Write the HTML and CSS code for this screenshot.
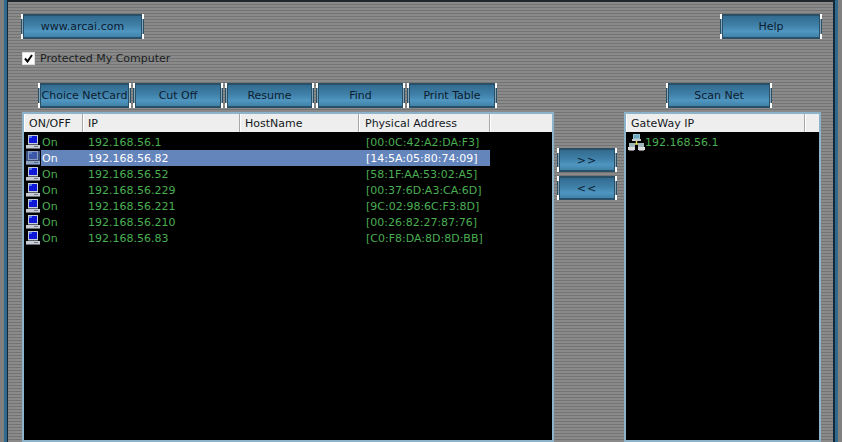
FILE: index.html
```html
<!DOCTYPE html>
<html lang="en">
  <head>
    <meta charset="UTF-8" />
    <meta name="viewport" content="width=device-width, initial-scale=1.0" />
    <title>Arcai NetCut</title>
    <link rel="stylesheet" href="styles.css">
  </head>
  <body>
    <svg class="defs" width="0" height="0">
      <symbol id="pc" viewBox="0 0 14 14">
        <rect x="2" y="0" width="10" height="9" fill="#c4ccdc" />
        <rect x="3" y="1" width="8" height="7" fill="#1018d8" />
        <rect x="3" y="1" width="3" height="2" fill="#5070e8" />
        <rect x="2" y="9" width="10" height="1" fill="#5c6068" />
        <rect x="0" y="10" width="14" height="3" fill="#c8ccd4" />
        <rect x="8" y="11" width="4" height="1" fill="#74787f" />
        <rect x="0" y="13" width="14" height="1" fill="#686c74" />
      </symbol>
      <symbol id="pc-selected" viewBox="0 0 14 14">
        <rect x="0" y="0" width="14" height="14" fill="#3c5280" />
        <rect x="2" y="0" width="10" height="9" fill="#8a9cc0" />
        <rect x="3" y="1" width="8" height="7" fill="#3c58a8" />
        <rect x="3" y="1" width="3" height="2" fill="#6080c4" />
        <rect x="2" y="9" width="10" height="1" fill="#3c4a68" />
        <rect x="0" y="10" width="14" height="3" fill="#90a4c4" />
        <rect x="8" y="11" width="4" height="1" fill="#5a6c90" />
        <rect x="0" y="13" width="14" height="1" fill="#506488" />
      </symbol>
      <symbol id="gate" viewBox="0 0 17 17">
        <rect x="5" y="0" width="7" height="5" fill="#8cc4d4" />
        <rect x="6" y="1" width="5" height="3" fill="#6fa8bc" />
        <rect x="4" y="5" width="9" height="2" fill="#c4ccd0" />
        <path d="M8.5 7V10M3.5 10H13.5" stroke="#e8e060" stroke-width="1.4" fill="none" />
        <rect x="1" y="9" width="6" height="4" fill="#a0b4bc" />
        <rect x="0" y="13" width="7" height="3" fill="#dcdcdc" />
        <rect x="1" y="16" width="5" height="1" fill="#7c8084" />
        <rect x="10" y="9" width="6" height="4" fill="#a0b4bc" />
        <rect x="10" y="13" width="7" height="3" fill="#dcdcdc" />
        <rect x="11" y="16" width="5" height="1" fill="#7c8084" />
      </symbol>
    </svg>

    <div class="frame">
      <div class="panel">
        <div class="top-row">
          <button class="btn btn-site">www.arcai.com</button>
          <button class="btn btn-help">Help</button>
        </div>

        <label class="protect">
          <span class="check">
            <svg width="9" height="9" viewBox="0 0 9 9"><path d="M1 4.5L3.5 7.5L8 1" stroke="#000" stroke-width="2" fill="none" /></svg>
          </span>
          Protected My Computer
        </label>

        <div class="toolbar">
          <button class="btn btn-card">Choice NetCard</button>
          <button class="btn btn-cut">Cut Off</button>
          <button class="btn btn-resume">Resume</button>
          <button class="btn btn-find">Find</button>
          <button class="btn btn-print">Print Table</button>
          <button class="btn btn-scan">Scan Net</button>
        </div>

        <div class="lists">
          <div class="list list-hosts">
            <div class="list-head">
              <div class="col col-onoff">ON/OFF</div>
              <div class="col col-ip">IP</div>
              <div class="col col-host">HostName</div>
              <div class="col col-mac">Physical Address</div>
              <div class="col col-rest"></div>
            </div>
            <div class="list-body">
              <div class="row">
                <svg class="pc"><use href="#pc" /></svg>
                <div class="row-cells"><span class="cell-on">On</span><span class="cell-ip">192.168.56.1</span><span>[00:0C:42:A2:DA:F3]</span></div>
              </div>
              <div class="row selected">
                <svg class="pc"><use href="#pc-selected" /></svg>
                <div class="row-cells"><span class="cell-on">On</span><span class="cell-ip">192.168.56.82</span><span>[14:5A:05:80:74:09]</span></div>
              </div>
              <div class="row">
                <svg class="pc"><use href="#pc" /></svg>
                <div class="row-cells"><span class="cell-on">On</span><span class="cell-ip">192.168.56.52</span><span>[58:1F:AA:53:02:A5]</span></div>
              </div>
              <div class="row">
                <svg class="pc"><use href="#pc" /></svg>
                <div class="row-cells"><span class="cell-on">On</span><span class="cell-ip">192.168.56.229</span><span>[00:37:6D:A3:CA:6D]</span></div>
              </div>
              <div class="row">
                <svg class="pc"><use href="#pc" /></svg>
                <div class="row-cells"><span class="cell-on">On</span><span class="cell-ip">192.168.56.221</span><span>[9C:02:98:6C:F3:8D]</span></div>
              </div>
              <div class="row">
                <svg class="pc"><use href="#pc" /></svg>
                <div class="row-cells"><span class="cell-on">On</span><span class="cell-ip">192.168.56.210</span><span>[00:26:82:27:87:76]</span></div>
              </div>
              <div class="row">
                <svg class="pc"><use href="#pc" /></svg>
                <div class="row-cells"><span class="cell-on">On</span><span class="cell-ip">192.168.56.83</span><span>[C0:F8:DA:8D:8D:BB]</span></div>
              </div>
            </div>
          </div>

          <div class="arrows">
            <button class="btn btn-arrow">&gt;&gt;</button>
            <button class="btn btn-arrow">&lt;&lt;</button>
          </div>

          <div class="list list-gate">
            <div class="list-head">
              <div class="col col-gate">GateWay IP</div>
              <div class="col col-rest"></div>
            </div>
            <div class="list-body">
              <div class="gate-row">
                <svg class="gate"><use href="#gate" /></svg>
                <span class="gate-ip">192.168.56.1</span>
              </div>
            </div>
          </div>
        </div>
      </div>
    </div>
  </body>
</html>
```

FILE: styles.css
```css
html,
body {
  margin: 0;
  height: 442px;
  overflow: hidden;
}
body {
  background-color: #808080;
  font-family: 'DejaVu Sans', sans-serif;
  font-size: 11px;
  color: #14181c;
  box-sizing: border-box;
  padding: 0 4px;
}
.defs {
  display: block;
  height: 0;
}
.frame {
  height: 442px;
  box-sizing: border-box;
  border-left: 3px solid #2f6a8c;
  border-right: 3px solid #2f6a8c;
}
.panel {
  height: 442px;
  box-sizing: border-box;
  border-left: 1px solid #12283a;
  border-right: 2px solid #12283a;
  border-top: 2px solid #20262c;
  padding: 12px 11px 0 14px;
  background: repeating-linear-gradient(to bottom, #8a8a8a 0, #8a8a8a 2px, #747474 2px, #747474 3px);
}

/* buttons: corner ticks, side strips, top and bottom edge, then the blue face */
.btn {
  display: block;
  height: 25px;
  padding: 0;
  border: 0;
  box-sizing: border-box;
  font-family: inherit;
  font-size: 11px;
  color: #0c1c30;
  cursor: pointer;
  background-color: #4688b0;
  background-image:
    linear-gradient(#fff, #fff), linear-gradient(#fff, #fff),
    linear-gradient(#fff, #fff), linear-gradient(#fff, #fff),
    linear-gradient(to right, #2a5068 0, #2a5068 1px, #86a4b6 1px, #86a4b6 2px, #2a5068 2px),
    linear-gradient(to right, #2a5068 0, #2a5068 1px, #86a4b6 1px, #86a4b6 2px, #2a5068 2px),
    linear-gradient(#2a5068, #2a5068), linear-gradient(#2a5068, #2a5068),
    linear-gradient(to bottom, #30668a 0, #3f80a8 45%, #4f96c0 70%, #3a7aa0 100%);
  background-repeat: no-repeat;
  background-size: 2px 5px, 2px 5px, 2px 5px, 2px 5px, 3px 100%, 3px 100%, 100% 2px, 100% 2px, 100% 100%;
  background-position: left top, right top, left bottom, right bottom, left top, right top, left top, left bottom, left top;
}
.top-row {
  display: flex;
  justify-content: space-between;
}
.btn-site {
  width: 123px;
  margin-left: -1px;
}
.btn-help {
  width: 102px;
}
.protect {
  display: flex;
  align-items: center;
  gap: 5px;
  height: 14px;
  margin: 12px 0 0 0;
  color: #1a1e22;
}
.check {
  display: flex;
  align-items: center;
  justify-content: center;
  width: 11px;
  height: 11px;
  background-color: #fff;
  border: 1px solid #ddd;
  box-sizing: content-box;
}
.toolbar {
  display: flex;
  gap: 2px;
  margin: 18px 0 0 16px;
}
.btn-card {
  width: 93px;
}
.btn-cut {
  width: 90px;
}
.btn-resume {
  width: 89px;
}
.btn-find {
  width: 89px;
}
.btn-print {
  width: 90px;
}
.btn-scan {
  width: 106px;
  margin-left: 167px;
}

/* lists */
.lists {
  display: flex;
  margin-top: 4px;
}
.list {
  height: 330px;
  box-sizing: border-box;
  border: 2px solid #8db3cb;
  background-color: #000;
}
.list-hosts {
  width: 532px;
}
.list-gate {
  width: 197px;
}
.list-head {
  display: flex;
  height: 18px;
  background-color: #eeeeee;
}
.col {
  box-sizing: border-box;
  padding: 1px 0 0 4px;
  line-height: 18px;
  border-left: 1px solid #fff;
  border-right: 1px solid #a8a8a8;
  overflow: hidden;
  white-space: nowrap;
}
.col-onoff {
  width: 59px;
}
.col-ip {
  width: 157px;
}
.col-host {
  width: 119px;
}
.col-mac {
  width: 131px;
  padding-left: 5px;
}
.col-rest {
  flex: 1;
  border-right: 0;
}
.col-gate {
  width: 179px;
}
.list-body {
  padding-top: 2px;
  color: #4aae52;
}
.row {
  display: flex;
  height: 16px;
}
.pc {
  width: 14px;
  height: 14px;
  margin: 1px 1px 0 2px;
  flex: none;
}
.row-cells {
  display: flex;
  width: 449px;
  height: 16px;
  padding-left: 1px;
  box-sizing: border-box;
  line-height: 17px;
}
.cell-on {
  width: 46px;
}
.cell-ip {
  width: 278px;
}
.selected .row-cells {
  background-color: #6484bc;
  color: #fff;
}
.arrows {
  display: flex;
  flex-direction: column;
  gap: 4px;
  width: 70px;
  padding: 36px 0 0 3px;
  box-sizing: border-box;
}
.btn-arrow {
  width: 60px;
  height: 24px;
  letter-spacing: 1px;
}
.gate-row {
  display: flex;
  height: 17px;
  padding-left: 2px;
}
.gate-ip {
  line-height: 17px;
}
.gate {
  width: 17px;
  height: 17px;
  flex: none;
}
```
